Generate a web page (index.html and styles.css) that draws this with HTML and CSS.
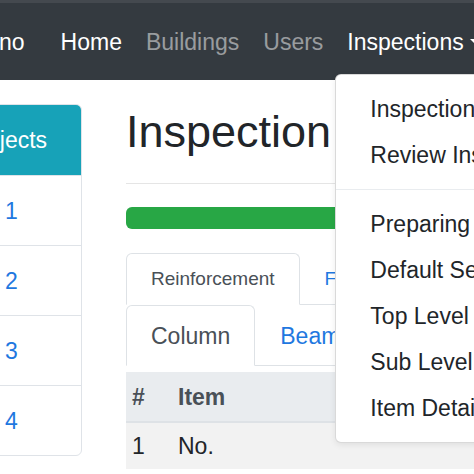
FILE: index.html
```html
<!DOCTYPE html>
<html lang="en">
<head>
    <meta charset="UTF-8">
    <meta name="viewport" content="width=device-width, initial-scale=1.0">
    <title>Inspections</title>
    <link rel="stylesheet" href="styles.css">
</head>
<body>
    <!-- Navbar -->
    <nav class="navbar">
        <span class="brand">no</span>
        <ul class="nav-links">
            <li><a class="active" href="#">Home</a></li>
            <li><a href="#">Buildings</a></li>
            <li><a href="#">Users</a></li>
            <li class="dropdown">
                <a class="active dropdown-toggle" href="#">Inspections</a>
                <div class="dropdown-menu">
                    <a href="#">Inspections</a>
                    <a href="#">Review Inspections</a>
                    <div class="dropdown-divider"></div>
                    <a href="#">Preparing Items</a>
                    <a href="#">Default Settings</a>
                    <a href="#">Top Level Items</a>
                    <a href="#">Sub Level Items</a>
                    <a href="#">Item Details</a>
                </div>
            </li>
        </ul>
    </nav>

    <div class="page">
        <!-- Sidebar -->
        <aside class="sidebar">
            <div class="card-header">Projects</div>
            <a class="list-item" href="#">1</a>
            <a class="list-item" href="#">2</a>
            <a class="list-item" href="#">3</a>
            <a class="list-item" href="#">4</a>
        </aside>

        <!-- Contenido -->
        <main class="main">
            <h1>Inspection Items</h1>
            <hr>
            <div class="progress">
                <div class="progress-bar" style="width: 70%"></div>
            </div>

            <ul class="tabs tabs-small">
                <li><a class="tab active" href="#">Reinforcement</a></li>
                <li><a class="tab" href="#">Formwork</a></li>
            </ul>
            <ul class="tabs">
                <li><a class="tab active" href="#">Column</a></li>
                <li><a class="tab" href="#">Beam</a></li>
                <li><a class="tab" href="#">Slab</a></li>
            </ul>

            <table class="items">
                <thead>
                    <tr>
                        <th class="col-num">#</th>
                        <th class="col-item">Item</th>
                        <th>Result</th>
                    </tr>
                </thead>
                <tbody>
                    <tr>
                        <td>1</td>
                        <td>No.</td>
                        <td></td>
                    </tr>
                </tbody>
            </table>
        </main>
    </div>
</body>
</html>
```

FILE: styles.css
```css
html,
body {
    margin: 0;
    overflow: hidden;
}

body {
    width: 474px;
    height: 474px;
    font-family: "Liberation Sans", Arial, sans-serif;
    font-size: 23px;
    line-height: 34px;
    color: #212529;
    background-color: #fff;
}

a {
    text-decoration: none;
}

/* Navbar */
.navbar {
    display: flex;
    align-items: flex-start;
    height: 80px;
    box-sizing: border-box;
    padding-top: 22px;
    background-color: #343a40;
    border-top: 3px solid #44494f;
}

.navbar .brand {
    flex-shrink: 0;
    color: #fff;
    margin-left: -1px;
    margin-right: 24px;
}

.nav-links {
    display: flex;
    flex-shrink: 0;
    list-style: none;
    margin: 0;
    padding: 0;
}

.nav-links > li {
    flex-shrink: 0;
}

.nav-links > li > a {
    display: block;
    padding: 0 12px;
    color: rgba(255, 255, 255, 0.5);
    white-space: nowrap;
}

.nav-links > li > a.active {
    color: #fff;
}

.dropdown {
    position: relative;
}

.dropdown-toggle::after {
    content: "";
    display: inline-block;
    margin-left: 6px;
    vertical-align: 4px;
    border-top: 7px solid #fff;
    border-left: 7px solid transparent;
    border-right: 7px solid transparent;
}

.dropdown-menu {
    position: absolute;
    top: 49px;
    left: 0;
    width: 240px;
    padding: 11px 0;
    background-color: #fff;
    border: 1px solid rgba(0, 0, 0, 0.15);
    border-radius: 6px;
    box-shadow: 0 2px 6px rgba(0, 0, 0, 0.08);
    z-index: 10;
}

.dropdown-menu a {
    display: block;
    padding: 6px 34px;
    color: #212529;
    white-space: nowrap;
}

.dropdown-divider {
    height: 0;
    margin: 11px 0;
    border-top: 1px solid #e9ecef;
}

/* Layout */
.page {
    display: flex;
    gap: 44px;
    margin-top: 24px;
}

.sidebar {
    flex-shrink: 0;
    width: 118px;
    margin-left: -38px;
    border: 1px solid #dfe3e8;
    border-radius: 6px;
    overflow: hidden;
    align-self: flex-start;
}

.sidebar .card-header {
    padding: 18px 0 18px 1px;
    background-color: #17a2b8;
    color: #fff;
}

.sidebar .list-item {
    display: block;
    padding: 18px 0 17px 42px;
    border-top: 1px solid #dfe3e8;
    color: #1f78e0;
}

.main {
    flex-shrink: 0;
    width: 420px;
}

.main h1 {
    margin: 1px 0 24px;
    font-size: 45px;
    font-weight: normal;
    line-height: 54px;
    white-space: nowrap;
}

.main hr {
    height: 0;
    margin: 0 0 23px;
    border: 0;
    border-top: 1px solid #e5e5e5;
}

.progress {
    height: 22px;
    margin-bottom: 24px;
    background-color: #e9ecef;
    border-radius: 6px;
    overflow: hidden;
}

.progress-bar {
    height: 100%;
    background-color: #28a745;
}

/* Tabs */
.tabs {
    display: flex;
    list-style: none;
    margin: 0;
    padding: 0;
    border-bottom: 1px solid #dee2e6;
}

.tabs .tab {
    display: block;
    margin-bottom: -1px;
    padding: 13px 24px 12px;
    color: #1f78e0;
    border: 1px solid transparent;
    border-top-left-radius: 6px;
    border-top-right-radius: 6px;
    white-space: nowrap;
}

.tabs .tab.active {
    color: #495057;
    background-color: #fff;
    border-color: #dee2e6 #dee2e6 #fff;
}

.tabs-small .tab {
    padding: 11px 24px;
    font-size: 19px;
    line-height: 28px;
}

/* Tabla */
.items {
    width: 100%;
    margin-top: 6px;
    border-collapse: collapse;
}

.items th {
    padding: 8px 6px 7px;
    text-align: left;
    color: #495057;
    background-color: #e9ecef;
    border-bottom: 2px solid #dee2e6;
}

.items td {
    padding: 6px;
    background-color: #f2f2f2;
}

.items .col-num {
    width: 34px;
}

.items .col-item {
    width: 200px;
}
```
